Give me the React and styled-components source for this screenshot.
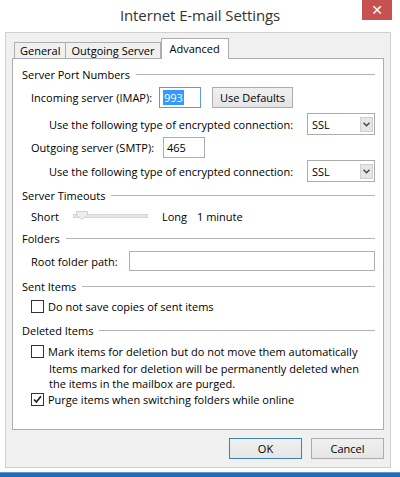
import React from 'react';
import styled, { createGlobalStyle } from 'styled-components';

const GlobalStyle = createGlobalStyle`
  html, body {
    margin: 0;
    padding: 0;
    background: #ffffff;
  }
  * {
    box-sizing: border-box;
  }
`;

const font = `'Open Sans', 'Noto Sans', 'DejaVu Sans', sans-serif`;

const Window = styled.div`
  width: 400px;
  height: 477px;
  display: flex;
  flex-direction: column;
  background: #ffffff;
  font-family: ${font};
  font-size: 11px;
  color: #000;
  overflow: hidden;
`;

const TitleBar = styled.div`
  height: 32px;
  display: grid;
  grid-template-columns: 1fr auto 1fr;
  align-items: start;
`;

const Title = styled.div`
  grid-column: 2;
  padding-top: 5px;
  font-size: 15px;
  color: #333;
  letter-spacing: -0.1px;
`;

const CloseButton = styled.div`
  grid-column: 3;
  justify-self: end;
  margin-right: 8px;
  width: 30px;
  height: 20px;
  background: #c75050;
  color: #fff;
  font-size: 14px;
  font-weight: bold;
  display: flex;
  align-items: center;
  justify-content: center;
  line-height: 1;
`;

const Client = styled.div`
  margin: 0 9px 0 5px;
  height: 436px;
  background: #f0f0f0;
  border: 1px solid #cfcfcf;
  padding: 5px 6px 0 6px;
  display: flex;
  flex-direction: column;
`;

const TabRow = styled.div`
  display: flex;
  align-items: flex-end;
  height: 21px;
  padding-left: 2px;
  margin-bottom: -1px;
  position: relative;
  z-index: 1;
`;

const Tab = styled.div`
  height: ${({ active }) => (active ? '21px' : '17px')};
  padding: ${({ active }) => (active ? '2px 8px 0 8px' : '0 5px')};
  border: 1px solid #adadad;
  border-bottom: ${({ active }) => (active ? 'none' : '1px solid #adadad')};
  border-left: ${({ first, active }) =>
    first || active ? '1px solid #adadad' : 'none'};
  background: ${({ active }) => (active ? '#ffffff' : '#f0f0f0')};
  display: flex;
  align-items: ${({ active }) => (active ? 'flex-start' : 'center')};
  white-space: nowrap;
`;

const Panel = styled.div`
  height: 372px;
  background: #ffffff;
  border: 1px solid #adadad;
  padding: 7px 8px 0 9px;
  display: flex;
  flex-direction: column;
`;

const GroupHeader = styled.div`
  display: flex;
  align-items: center;
  height: 16px;
  margin-top: ${({ gap }) => gap || 0}px;
  white-space: nowrap;
  &::after {
    content: '';
    flex: 1;
    height: 1px;
    margin-left: 6px;
    background: #b4b4b4;
  }
`;

const Row = styled.div`
  display: flex;
  align-items: center;
  height: ${({ h }) => h || 16}px;
  margin-top: ${({ gap }) => gap || 0}px;
  padding-left: ${({ indent }) => indent || 0}px;
  white-space: nowrap;
`;

const Label = styled.span`
  width: ${({ w }) => (w ? `${w}px` : 'auto')};
  flex-shrink: 0;
`;

const TextBox = styled.div`
  width: ${({ w }) => w}px;
  height: ${({ h }) => h || 21}px;
  border: 1px solid ${({ focused }) => (focused ? '#569de5' : '#abadb3')};
  background: #fff;
  display: flex;
  align-items: center;
  padding-left: 3px;
  flex: ${({ grow }) => (grow ? 1 : 'none')};
`;

const Selection = styled.span`
  background: #3399ff;
  color: #fff;
  padding: 0 1px;
  line-height: 15px;
`;

const Button = styled.div`
  width: ${({ w }) => w}px;
  height: 21px;
  border: 1px solid ${({ primary }) => (primary ? '#3c7fb1' : '#acacac')};
  background: linear-gradient(#f0f0f0, #e5e5e5);
  display: flex;
  align-items: center;
  justify-content: center;
  margin-left: ${({ gap }) => gap || 0}px;
`;

const Select = styled.div`
  margin-left: auto;
  width: 68px;
  height: 22px;
  border: 1px solid #acacac;
  background: #fff;
  display: flex;
  align-items: center;
  justify-content: space-between;
  padding: 0 1px 0 4px;
`;

const SelectArrow = styled.div`
  width: 13px;
  height: 15px;
  background: #e6e6e6;
  border: 1px solid #d0d0d0;
  display: flex;
  align-items: center;
  justify-content: center;
`;

const Slider = styled.div`
  position: relative;
  width: 75px;
  height: 4px;
  margin: 0 14px 0 11px;
  background: #e7e7e7;
  border: 1px solid #d6d6d6;
`;

const Thumb = styled.svg`
  position: absolute;
  left: 2px;
  top: -4px;
`;

const CheckBox = styled.div`
  width: 13px;
  height: 13px;
  border: 1px solid #333;
  background: #fff;
  margin-right: 4px;
  display: flex;
  align-items: center;
  justify-content: center;
  flex-shrink: 0;
`;

const Note = styled.div`
  margin-top: 2px;
  padding-left: 27px;
  line-height: 15px;
  white-space: nowrap;
`;

const Footer = styled.div`
  display: flex;
  justify-content: flex-end;
  gap: 9px;
  padding-top: 8px;
`;

const Taskbar = styled.div`
  margin-top: auto;
  height: 5px;
  background: #1f6db7;
  border-top: 1px solid #5a9ad6;
`;

const Chevron = () => (
  <svg width="7" height="5" viewBox="0 0 7 5">
    <path d="M0.5 0.8 L3.5 3.8 L6.5 0.8" fill="none" stroke="#444" strokeWidth="1.3" />
  </svg>
);

const Check = () => (
  <svg width="9" height="9" viewBox="0 0 9 9">
    <path d="M1 4.5 L3.4 7 L8 1.2" fill="none" stroke="#222" strokeWidth="1.7" />
  </svg>
);

const EncryptionRow = ({ gap }) => (
  <Row h={22} gap={gap} indent={27}>
    <Label>Use the following type of encrypted connection:</Label>
    <Select>
      <span>SSL</span>
      <SelectArrow>
        <Chevron />
      </SelectArrow>
    </Select>
  </Row>
);

const App = () => (
  <Window>
    <GlobalStyle />
    <TitleBar>
      <Title>Internet E-mail Settings</Title>
      <CloseButton>✕</CloseButton>
    </TitleBar>
    <Client>
      <TabRow>
        <Tab first>General</Tab>
        <Tab>Outgoing Server</Tab>
        <Tab active>Advanced</Tab>
      </TabRow>
      <Panel>
        <GroupHeader>Server Port Numbers</GroupHeader>
        <Row h={21} gap={5} indent={9}>
          <Label w={128}>Incoming server (IMAP):</Label>
          <TextBox w={42} focused>
            <Selection>993</Selection>
          </TextBox>
          <Button w={81} gap={11}>Use Defaults</Button>
        </Row>
        <EncryptionRow gap={5} />
        <Row h={21} gap={2} indent={9}>
          <Label w={132}>Outgoing server (SMTP):</Label>
          <TextBox w={42}>465</TextBox>
        </Row>
        <EncryptionRow gap={2} />

        <GroupHeader gap={5}>Server Timeouts</GroupHeader>
        <Row gap={5} indent={9}>
          <Label w={31}>Short</Label>
          <Slider>
            <Thumb width="12" height="9" viewBox="0 0 12 9">
              <path d="M0.5 0.5 H11.5 V4 L6 8.5 L0.5 4 Z" fill="#eeeeee" stroke="#d0d0d0" />
            </Thumb>
          </Slider>
          <Label w={35}>Long</Label>
          <Label>1 minute</Label>
        </Row>

        <GroupHeader gap={6}>Folders</GroupHeader>
        <Row h={20} gap={5} indent={9}>
          <Label w={98}>Root folder path:</Label>
          <TextBox grow h={20} />
        </Row>

        <GroupHeader gap={7}>Sent Items</GroupHeader>
        <Row gap={4} indent={9}>
          <CheckBox />
          <Label>Do not save copies of sent items</Label>
        </Row>

        <GroupHeader gap={8}>Deleted Items</GroupHeader>
        <Row gap={5} indent={9}>
          <CheckBox />
          <Label>Mark items for deletion but do not move them automatically</Label>
        </Row>
        <Note>
          Items marked for deletion will be permanently deleted when
          <br />
          the items in the mailbox are purged.
        </Note>
        <Row indent={9}>
          <CheckBox>
            <Check />
          </CheckBox>
          <Label>Purge items when switching folders while online</Label>
        </Row>
      </Panel>
      <Footer>
        <Button w={73} primary>OK</Button>
        <Button w={73}>Cancel</Button>
      </Footer>
    </Client>
    <Taskbar />
  </Window>
);

export default App;
